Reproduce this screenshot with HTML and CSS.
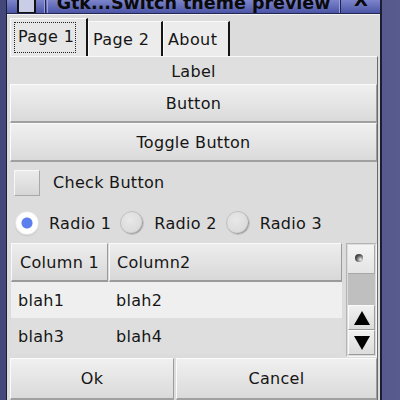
FILE: index.html
```html
<!DOCTYPE html>
<html>
<head>
<meta charset="utf-8">
<link rel="stylesheet" href="styles.css">
</head>
<body>
<div class="desk">
  <div class="win">
    <div class="titlebar">
      <div class="tb-btn"><span class="menu-icon"></span></div>
      <div class="tb-title"><span class="title-text">Gtk...Switch theme preview</span></div>
      <div class="tb-close"><span class="close-text">X</span></div>
    </div>
    <div class="content">
      <div class="tabs">
        <div class="tab active"><span class="focus">Page 1</span></div>
        <div class="tab">Page 2</div>
        <div class="tab">About</div>
      </div>
      <div class="page">
        <div class="label-row">Label</div>
        <div class="btn wide">Button</div>
        <div class="btn wide">Toggle Button</div>
        <div class="check-row">
          <span class="checkbox"></span>
          <span class="check-text">Check Button</span>
        </div>
        <div class="radio-row">
          <span class="radio on"></span><span class="radio-text">Radio 1</span>
          <span class="radio"></span><span class="radio-text">Radio 2</span>
          <span class="radio"></span><span class="radio-text">Radio 3</span>
        </div>
        <div class="tree-area">
          <div class="tree">
            <div class="tree-head">
              <div class="th c1">Column 1</div>
              <div class="th c2">Column2</div>
            </div>
            <div class="tr odd"><span class="td c1">blah1</span><span class="td">blah2</span></div>
            <div class="tr even"><span class="td c1">blah3</span><span class="td">blah4</span></div>
          </div>
          <div class="scrollbar">
            <div class="slider"><span class="ball"></span></div>
            <div class="trough"></div>
            <div class="step">
              <svg width="18" height="16" viewBox="0 0 18 16"><polygon points="9,1 17,15 1,15" fill="#000"/></svg>
            </div>
            <div class="step">
              <svg width="18" height="16" viewBox="0 0 18 16"><polygon points="1,1 17,1 9,15" fill="#000"/></svg>
            </div>
          </div>
        </div>
        <div class="actions">
          <div class="btn ok">Ok</div>
          <div class="btn cancel">Cancel</div>
        </div>
      </div>
    </div>
  </div>
</div>
</body>
</html>
```

FILE: styles.css
```css
html, body {
  margin: 0;
  padding: 0;
}
body {
  width: 400px;
  height: 400px;
  overflow: hidden;
  font-family: "DejaVu Sans", sans-serif;
  color: #151515;
}
.desk {
  width: 400px;
  height: 400px;
  background: linear-gradient(90deg, #44477a 0, #4a4d7f 50%, #585b8d 100%);
  padding-left: 6px;
  box-sizing: border-box;
}
.win {
  width: 376px;
  height: 400px;
  border-left: 1px solid #1c1d33;
  border-right: 2px solid #1c1d33;
  box-sizing: border-box;
  display: flex;
  flex-direction: column;
  background: #dcdcdc;
}
.titlebar {
  height: 17px;
  display: flex;
  border-bottom: 1px solid #23264f;
  box-sizing: border-box;
  background: linear-gradient(#7c84cb, #4c56a6);
  overflow: hidden;
}
.tb-btn {
  width: 38px;
  border-right: 1px solid #1f2350;
  box-shadow: inset -1px 0 0 #9aa0d8;
  display: flex;
  justify-content: center;
  overflow: hidden;
}
.menu-icon {
  display: block;
  width: 15px;
  height: 15px;
  margin-top: -5px;
  border: 2px solid #111;
  background: #c9cde6;
}
.tb-title {
  flex: 1;
  text-align: center;
  overflow: hidden;
  border-right: 1px solid #1f2350;
  box-shadow: inset -1px 0 0 #9aa0d8, inset 1px 0 0 #9aa0d8;
  margin-left: 1px;
}
.title-text {
  display: block;
  font-weight: bold;
  font-size: 17.5px;
  line-height: 18px;
  margin-top: -6px;
  color: #0a0a0a;
  white-space: nowrap;
}
.tb-close {
  width: 38px;
  text-align: center;
  overflow: hidden;
  margin-left: 1px;
}
.close-text {
  display: block;
  font-weight: bold;
  font-size: 18px;
  line-height: 18px;
  margin-top: -9px;
  color: #0a0a0a;
}
.content {
  flex: 1;
  padding: 3px 2px 0 3px;
  display: flex;
  flex-direction: column;
  border-top: 1px solid #f4f4f4;
  box-sizing: border-box;
}
.tabs {
  height: 38px;
  display: flex;
  align-items: flex-end;
  font-size: 16px;
  letter-spacing: 0.4px;
}
.tab {
  height: 35px;
  box-sizing: border-box;
  padding: 0 6px 0 4px;
  display: flex;
  align-items: center;
  background: #ececec;
  border-left: 1px solid #fafafa;
  border-top: 1px solid #fafafa;
  border-right: 2px solid #151515;
}
.tab.active {
  height: 38px;
  padding: 0 4px 0 3px;
  background: #e6e6e6;
}
.tab:nth-child(2) { width: 75px; }
.tab:nth-child(3) { width: 67px; }
.tab.active { width: 78px; }
.focus {
  border: 1.5px dotted #222;
  padding: 5px 1px 6px 3px;
  line-height: 18px;
}
.page {
  flex: 1;
  border-top: 1px solid #fafafa;
  border-right: 1px solid #6a6a6a;
  display: flex;
  flex-direction: column;
  font-size: 16px;
  letter-spacing: 0.3px;
}
.label-row {
  height: 27px;
  display: flex;
  align-items: center;
  justify-content: center;
  padding-top: 2px;
  box-sizing: border-box;
  background: #dfdfdf;
}
.btn {
  display: flex;
  align-items: center;
  justify-content: center;
  background: linear-gradient(#f0f0f0, #dadada);
  border-top: 1px solid #fbfbfb;
  border-left: 1px solid #fbfbfb;
  border-right: 1px solid #9c9c9c;
  border-bottom: 2px solid #a0a0a0;
  box-sizing: border-box;
}
.wide {
  height: 39px;
}
.check-row {
  height: 41px;
  display: flex;
  align-items: center;
  padding-left: 4px;
}
.checkbox {
  width: 26px;
  height: 26px;
  box-sizing: border-box;
  background: linear-gradient(#ebebeb, #d6d6d6);
  border-top: 1px solid #f8f8f8;
  border-left: 1px solid #f8f8f8;
  border-right: 1px solid #a8a8a8;
  border-bottom: 1px solid #a8a8a8;
  margin-right: 13px;
}
.radio-row {
  height: 40px;
  display: flex;
  align-items: center;
  padding-left: 5px;
}
.radio {
  width: 24px;
  height: 24px;
  box-sizing: border-box;
  border-radius: 50%;
  background: radial-gradient(circle at 40% 35%, #e8e8e8, #d4d4d4);
  border: 1px solid #c0c0c0;
  box-shadow: inset -1px -1px 1px #9a9a9a;
  margin-right: 10px;
}
.radio.on {
  background: radial-gradient(circle, #5b7fec 0, #5b7fec 5px, #ffffff 6px);
  border: 1px solid #e6e6e6;
  box-shadow: 0 1px 1px #c8c8c8;
}
.radio-text {
  margin-right: 9px;
}
.tree-area {
  height: 114px;
  display: flex;
}
.tree {
  width: 334px;
  display: flex;
  flex-direction: column;
  padding-left: 1px;
}
.tree-head {
  height: 39px;
  display: flex;
}
.th {
  display: flex;
  align-items: center;
  background: linear-gradient(#ededed, #d8d8d8);
  border-top: 1px solid #fafafa;
  border-left: 1px solid #fafafa;
  border-right: 1px solid #9a9a9a;
  border-bottom: 2px solid #9a9a9a;
  box-sizing: border-box;
  padding-left: 8px;
}
.th.c1 { width: 97px; margin-right: 1px; }
.th.c2 { width: 233px; padding-left: 7px; }
.tr {
  height: 36px;
  display: flex;
  align-items: center;
  width: 331px;
}
.tr.odd { background: #efefef; }
.tr.even { background: #dedede; }
.td { padding-left: 7px; }
.td.c1 { width: 91px; }
.scrollbar {
  width: 31px;
  margin-left: 2px;
  box-sizing: border-box;
  border: 1px solid #b4b4b4;
  border-right-color: #f6f6f6;
  border-bottom-color: #f6f6f6;
  padding: 1px;
  display: flex;
  flex-direction: column;
}
.slider {
  height: 29px;
  background: linear-gradient(#f4f4f4, #e4e4e4);
  border-right: 1px solid #a8a8a8;
  border-bottom: 1px solid #a8a8a8;
  box-sizing: border-box;
  position: relative;
}
.ball {
  position: absolute;
  left: 7px;
  top: 9px;
  width: 8px;
  height: 8px;
  border-radius: 50%;
  background: radial-gradient(circle at 70% 70%, #f0f0f0 0, #555 55%, #222 100%);
}
.trough {
  height: 32px;
  background: #bfbfbf;
}
.step {
  height: 25px;
  display: flex;
  align-items: center;
  justify-content: center;
  background: linear-gradient(#f0f0f0, #dcdcdc);
  border-top: 1px solid #fafafa;
  border-left: 1px solid #fafafa;
  border-right: 1px solid #9a9a9a;
  border-bottom: 1px solid #9a9a9a;
  box-sizing: border-box;
}
.actions {
  height: 42px;
  display: flex;
  gap: 2px;
  margin-top: 1px;
}
.ok { width: 164px; }
.cancel { flex: 1; }
```
